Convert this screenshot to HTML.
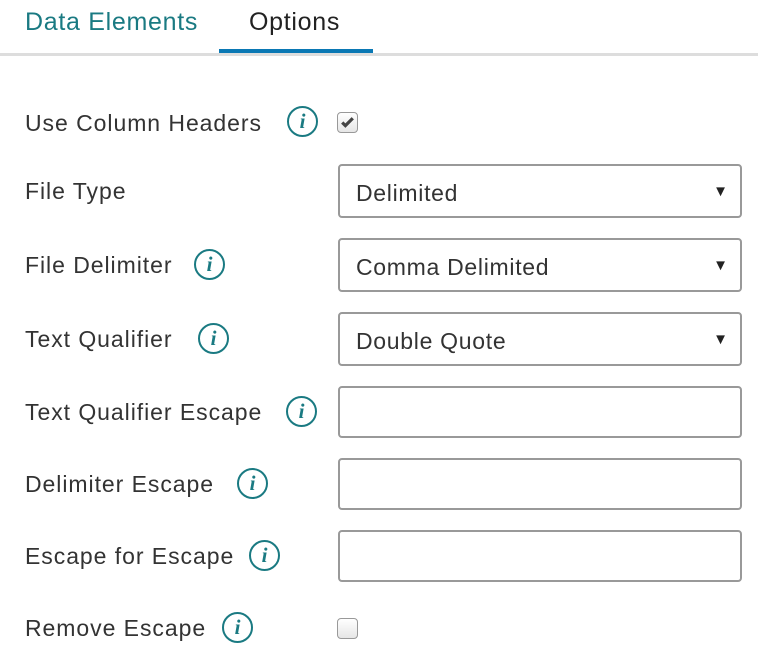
<!DOCTYPE html>
<html><head><style>
body{margin:0;width:758px;height:660px;background:#fff;font-family:"Liberation Sans",sans-serif;position:relative;overflow:hidden;color:#333}
.a{position:absolute}
.tab{font-size:25px;top:8px;letter-spacing:0.7px}
.lbl{font-size:23px;left:25px;color:#333;letter-spacing:0.95px}
.box{left:338px;width:404px;border:2px solid #999;border-radius:4px;box-sizing:border-box;background:#fff}
.box span{position:absolute;left:16px;font-size:23px;color:#333;letter-spacing:0.7px}
.box b{position:absolute;right:12px;font-size:15px;color:#222}
.ic{width:31px;height:31px;border:2px solid #1a7a82;border-radius:50%;box-sizing:border-box;color:#1a7a82;font:italic bold 21px "Liberation Serif",serif;text-align:center;line-height:27px}
.cb{left:337px;width:21px;height:21px;border:1px solid #999;border-radius:4px;box-sizing:border-box;background:linear-gradient(#fff,#e6e6e6)}
</style></head><body>
<div class="a tab" style="left:25px;color:#1a7a82">Data Elements</div>
<div class="a tab" style="left:249px;color:#222">Options</div>
<div class="a" style="left:0;top:53px;width:758px;height:3px;background:#ddd"></div>
<div class="a" style="left:219px;top:49px;width:154px;height:4px;background:#0a78b4"></div>

<div class="a lbl" style="top:110px">Use Column Headers</div>
<div class="a ic" style="left:287px;top:106px">i</div>
<div class="a cb" style="top:112px"><svg width="19" height="19" viewBox="0 0 18 18"><path d="M4 9l3 3 7-7" stroke="#444" stroke-width="3" fill="none"/></svg></div>

<div class="a lbl" style="top:178px">File Type</div>
<div class="a box" style="top:164px;height:54px"><span style="top:14px">Delimited</span><b style="top:17px">▼</b></div>

<div class="a lbl" style="top:252px">File Delimiter</div>
<div class="a ic" style="left:194px;top:249px">i</div>
<div class="a box" style="top:238px;height:54px"><span style="top:14px">Comma Delimited</span><b style="top:17px">▼</b></div>

<div class="a lbl" style="top:326px">Text Qualifier</div>
<div class="a ic" style="left:198px;top:323px">i</div>
<div class="a box" style="top:312px;height:54px"><span style="top:14px">Double Quote</span><b style="top:17px">▼</b></div>

<div class="a lbl" style="top:399px">Text Qualifier Escape</div>
<div class="a ic" style="left:286px;top:396px">i</div>
<div class="a box" style="top:386px;height:52px"></div>

<div class="a lbl" style="top:471px">Delimiter Escape</div>
<div class="a ic" style="left:237px;top:468px">i</div>
<div class="a box" style="top:458px;height:52px"></div>

<div class="a lbl" style="top:543px">Escape for Escape</div>
<div class="a ic" style="left:249px;top:540px">i</div>
<div class="a box" style="top:530px;height:52px"></div>

<div class="a lbl" style="top:615px">Remove Escape</div>
<div class="a ic" style="left:222px;top:612px">i</div>
<div class="a cb" style="top:618px"></div>
</body></html>
